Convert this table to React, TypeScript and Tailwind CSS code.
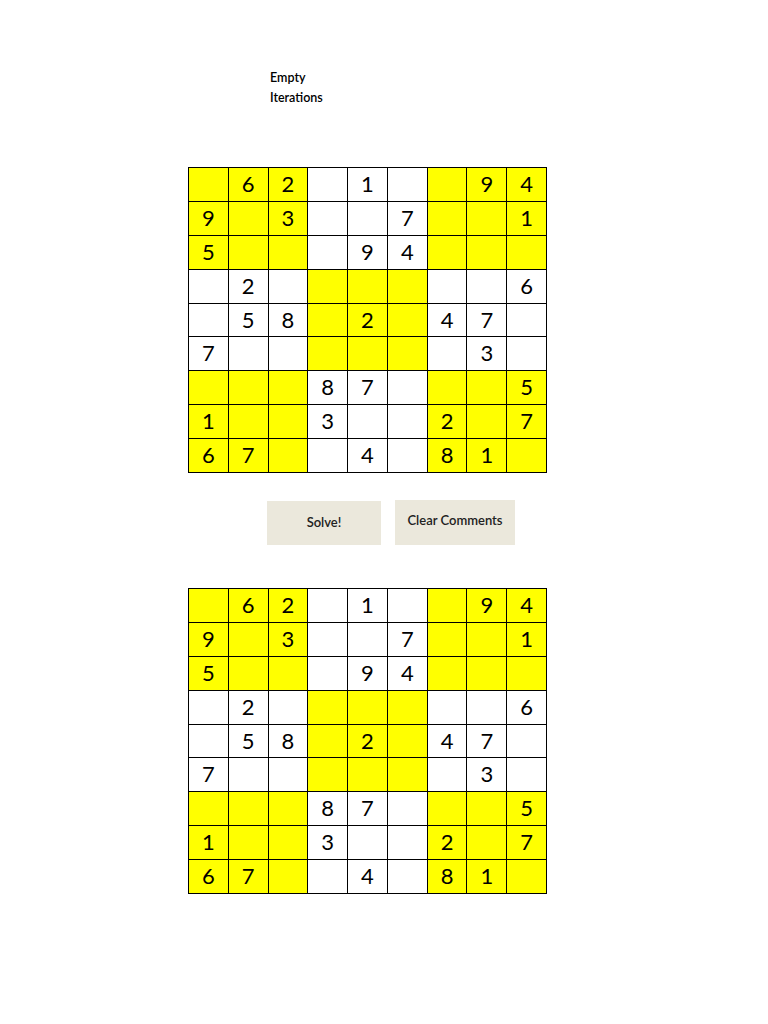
import React from "react"

const grid: (number | null)[][] = [
  [null, 6, 2, null, 1, null, null, 9, 4],
  [9, null, 3, null, null, 7, null, null, 1],
  [5, null, null, null, 9, 4, null, null, null],
  [null, 2, null, null, null, null, null, null, 6],
  [null, 5, 8, null, 2, null, 4, 7, null],
  [7, null, null, null, null, null, null, 3, null],
  [null, null, null, 8, 7, null, null, null, 5],
  [1, null, null, 3, null, null, 2, null, 7],
  [6, 7, null, null, 4, null, 8, 1, null],
]

// boxes that are shaded: corners and centre
function isYellow(r: number, c: number) {
  const br = Math.floor(r / 3)
  const bc = Math.floor(c / 3)
  return (br + bc) % 2 === 0
}

function Board() {
  return (
    <div className="ml-[188px] grid w-[359px] grid-cols-[repeat(9,1fr)] border-l border-t border-black">
      {grid.map((row, r) =>
        row.map((v, c) => (
          <div
            key={`${r}-${c}`}
            className={`flex h-[33.9px] items-center justify-center border-b border-r border-black pb-[2px] text-[22px] text-black ${
              isYellow(r, c) ? "bg-[#ffff00]" : "bg-white"
            }`}
          >
            {v ?? ""}
          </div>
        ))
      )}
    </div>
  )
}

export default function App() {
  return (
    <div className="min-h-[1024px] w-[768px] bg-white font-['Lato',sans-serif]">
      <div className="pt-[68px] pl-[270px] text-[12.5px] font-semibold leading-[20px] text-black">
        <div>Empty</div>
        <div>Iterations</div>
      </div>

      <div className="mt-[59px]">
        <Board />
      </div>

      <div className="mt-[28px] flex items-start pl-[267px]">
        <button className="flex h-[44px] w-[114px] items-center justify-center bg-[#ebe8dc] text-[13px] font-semibold text-[#222]">
          Solve!
        </button>
        <button className="ml-[14px] -mt-px flex h-[45px] w-[120px] items-start justify-center bg-[#ebe8dc] pt-[11px] text-[13px] font-semibold text-[#222]">
          Clear Comments
        </button>
      </div>

      <div className="mt-[43px]">
        <Board />
      </div>
    </div>
  )
}
